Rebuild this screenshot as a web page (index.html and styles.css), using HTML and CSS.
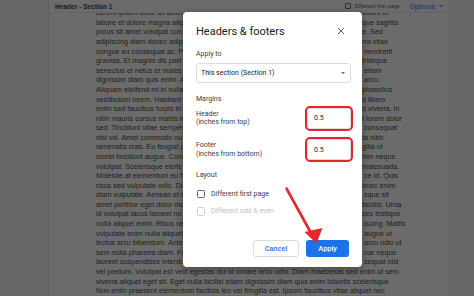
FILE: index.html
```html
<!DOCTYPE html>
<html>
<head>
<meta charset="utf-8">
<title>Headers &amp; footers</title>
<link rel="stylesheet" href="styles.css">
</head>
<body>
<div class="app">
  <div class="gutter"></div>
  <div class="page">
    <div class="hdr">
      <span class="hdr-title">Header - Section 1</span>
      <div class="hdr-right">
        <span class="mini-cb"></span>
        <span class="mini-lbl">Different first page</span>
        <span class="opts">Options<span class="opts-caret"></span></span>
      </div>
    </div>
    <div class="doc">
      <div class="doc-inner">
        <div class="ln">Lorem ipsum dolor sit amet, consectetur adipiscing elit, sed do eiusmod tempor incididunt ut</div>
        <div class="ln"><span class="l">labore et dolore magna aliq</span><span class="r">que sagittis</span></div>
        <div class="ln"><span class="l">purus sit amet volutpat con</span><span class="r">e. Sed</span></div>
        <div class="ln"><span class="l">adipiscing diam donec adip</span><span class="r">rra vitae</span></div>
        <div class="ln"><span class="l">congue eu consequat ac. P</span><span class="r pad">hendrerit</span></div>
        <div class="ln"><span class="l">gravida. Et magnis dis part</span><span class="r">tristique</span></div>
        <div class="ln"><span class="l">senectus et netus et males</span><span class="r pad">etiam</span></div>
        <div class="ln"><span class="l">dignissim diam quis enim. A</span><span class="r pad">arcu.</span></div>
        <div class="ln"><span class="l">Aliquam eleifend mi in nulla</span><span class="r">phasellus</span></div>
        <div class="ln"><span class="l">vestibulum lorem. Habitant</span><span class="r">d libero</span></div>
        <div class="ln"><span class="l">enim sed faucibus turpis in</span><span class="r">d viverra. In</span></div>
        <div class="ln"><span class="l">nibh mauris cursus mattis m</span><span class="r">t lorem dolor</span></div>
        <div class="ln"><span class="l">sed. Tincidunt vitae semper</span><span class="r pad">consequat</span></div>
        <div class="ln"><span class="l">nisl vel. Amet commodo nu</span><span class="r">ta nibh</span></div>
        <div class="ln"><span class="l">venenatis cras. Eu feugiat p</span><span class="r">gilla ut</span></div>
        <div class="ln"><span class="l">morbi tincidunt augue. Cons</span><span class="r">nim neque</span></div>
        <div class="ln"><span class="l">volutpat. Scelerisque eleife</span><span class="r">malesuada.</span></div>
        <div class="ln"><span class="l">Molestie at elementum eu f</span><span class="r pad">ce id. Quis</span></div>
        <div class="ln"><span class="l">risus sed vulputate odio. Du</span><span class="r">onec enim</span></div>
        <div class="ln"><span class="l">diam vulputate. Aenean et t</span><span class="r pad">sque sit</span></div>
        <div class="ln"><span class="l">amet porttitor eget dolor mo</span><span class="r">facilisi. Urna</span></div>
        <div class="ln"><span class="l">id volutpat lacus laoreet no</span><span class="r">ces tristique</span></div>
        <div class="ln"><span class="l">nulla aliquet enim. Risus ne</span><span class="r pad">iscing. Mattis</span></div>
        <div class="ln"><span class="l">vulputate enim nulla aliquet</span><span class="r pad">augue ut</span></div>
        <div class="ln"><span class="l">lectus arcu bibendum. Ante</span><span class="r pad">arcu odio ut</span></div>
        <div class="ln"><span class="l">sem nulla pharetra diam. Fa</span><span class="r pad">nar neque</span></div>
        <div class="ln"><span class="l">laoreet suspendisse interdu</span><span class="r pad">sequat nisi</span></div>
        <div class="ln">vel pretium. Volutpat est velit egestas dui id ornare arcu odio. Diam maecenas sed enim ut sem</div>
        <div class="ln">viverra aliquet eget sit. Eget nulla facilisi etiam dignissim diam quis enim lobortis scelerisque.</div>
        <div class="ln">Non enim praesent elementum facilisis leo vel fringilla est. Ipsum faucibus vitae aliquet nec</div>
      </div>
    </div>
  </div>
  <div class="gutter gutter-right"></div>

  <div class="dialog">
    <div class="dlg-head">
      <span class="dlg-title">Headers &amp; footers</span>
      <svg class="close" viewBox="0 0 10 10" width="10" height="10"><path d="M2 2 L8 8 M8 2 L2 8" stroke="#5f6368" stroke-width="1" fill="none"/></svg>
    </div>
    <div class="sect sect-apply">Apply to</div>
    <div class="select"><span>This section (Section 1)</span><span class="sel-caret"></span></div>
    <div class="sect sect-margins">Margins</div>
    <div class="mrow">
      <div class="mlabel">Header<br>(inches from top)</div>
      <div class="minput">0.5</div>
    </div>
    <div class="mrow mrow-footer">
      <div class="mlabel">Footer<br>(inches from bottom)</div>
      <div class="minput">0.5</div>
    </div>
    <div class="sect sect-layout">Layout</div>
    <div class="cb-row"><span class="cb"></span><span>Different first page</span></div>
    <div class="cb-row cb-disabled"><span class="cb"></span><span>Different odd &amp; even</span></div>
    <div class="btns">
      <div class="btn btn-cancel">Cancel</div>
      <div class="btn btn-apply">Apply</div>
    </div>
  </div>

  <svg class="arrow" viewBox="0 0 474 296" width="474" height="296">
    <line x1="286.5" y1="188.5" x2="311" y2="233" stroke="#e3292d" stroke-width="2.6" stroke-linecap="round"/>
    <polygon points="316.5,243.5 304.5,232 322.5,228" fill="#e3292d"/>
  </svg>
</div>
</body>
</html>
```

FILE: styles.css
```css
html, body {
  margin: 0;
  padding: 0;
}
body {
  background: #666666;
  font-family: "Liberation Sans", Arial, sans-serif;
}
.app {
  position: relative;
  display: flex;
  width: 474px;
  height: 296px;
  overflow: hidden;
  background: #666666;
}
.gutter {
  flex: 0 0 48px;
}
.gutter-right {
  flex: 1 1 auto;
}
.page {
  flex: 0 0 402px;
  box-sizing: border-box;
  background: #6b6b6b;
  border-left: 1px solid #5f5f5f;
  border-right: 1px solid #5f5f5f;
  display: flex;
  flex-direction: column;
}
.hdr {
  flex: 0 0 13px;
  box-sizing: border-box;
  display: flex;
  align-items: center;
  justify-content: space-between;
  padding: 0 6px 0 6px;
  border-bottom: 1px solid #646464;
}
.hdr-title {
  font-weight: bold;
  font-size: 6.6px;
  color: #1c1c1c;
}
.hdr-right {
  display: flex;
  align-items: center;
}
.mini-cb {
  width: 6px;
  height: 6px;
  box-sizing: border-box;
  border: 1px solid #2e2e2e;
  border-radius: 1px;
  margin-right: 4px;
}
.mini-lbl {
  font-size: 5.5px;
  color: #262626;
  margin-right: 10px;
}
.opts {
  display: flex;
  align-items: center;
  font-family: Roboto, sans-serif;
  font-weight: 500;
  font-size: 7.3px;
  color: #24406a;
}
.opts-caret {
  width: 0;
  height: 0;
  margin-left: 4px;
  border-left: 2px solid transparent;
  border-right: 2px solid transparent;
  border-top: 2.5px solid #24406a;
}
.doc {
  flex: 1 1 auto;
  overflow: hidden;
  padding-left: 47px;
}
.doc-inner {
  margin-top: -4.7px;
  font-size: 7.2px;
  line-height: 9.58px;
  color: #202020;
}
.ln {
  display: flex;
  height: 9.58px;
  white-space: nowrap;
}
.l {
  flex: 0 0 266px;
}
.r.pad {
  padding-left: 2px;
}

/* dialog */
.dialog {
  position: absolute;
  left: 183px;
  top: 12px;
  width: 179px;
  box-sizing: border-box;
  padding: 12px 11px 9.7px 13px;
  background: #ffffff;
  border-radius: 4px;
  box-shadow: 0 2px 8px rgba(0, 0, 0, 0.35);
  font-family: Roboto, "Liberation Sans", sans-serif;
  color: #3c4043;
}
.dlg-head {
  display: flex;
  align-items: center;
  justify-content: space-between;
  height: 14px;
}
.dlg-title {
  font-size: 11px;
  color: #202124;
  white-space: nowrap;
}
.close {
  margin-right: 5px;
}
.sect {
  font-size: 7px;
  line-height: 9px;
  color: #3c4043;
}
.sect-apply {
  margin-top: 11.8px;
}
.select {
  margin-top: 3.9px;
  height: 20px;
  box-sizing: border-box;
  border: 1px solid #dadce0;
  border-radius: 3px;
  display: flex;
  align-items: center;
  justify-content: space-between;
  padding: 0 5px 0 4px;
  font-size: 7px;
  color: #202124;
}
.sel-caret {
  width: 0;
  height: 0;
  border-left: 2px solid transparent;
  border-right: 2px solid transparent;
  border-top: 2.5px solid #5f6368;
}
.sect-margins {
  margin-top: 12.1px;
}
.mrow {
  margin-top: 4.2px;
  display: flex;
  align-items: center;
  justify-content: space-between;
  height: 20.7px;
}
.mrow-footer {
  margin-top: 10.6px;
}
.mlabel {
  font-size: 7px;
  line-height: 8.5px;
  color: #3c4043;
}
.minput {
  width: 44px;
  height: 20.7px;
  box-sizing: border-box;
  border: 1px solid #dadce0;
  border-radius: 3px;
  outline: 2.5px solid #e0282c;
  outline-offset: 0.5px;
  padding-left: 6px;
  display: flex;
  align-items: center;
  font-size: 7px;
  color: #202124;
}
.sect-layout {
  margin-top: 11.5px;
}
.cb-row {
  display: flex;
  align-items: center;
  gap: 5.7px;
  height: 12px;
  font-size: 7px;
  color: #3c4043;
  margin-top: 7.5px;
}
.cb-row + .cb-row {
  margin-top: 5.5px;
}
.cb {
  width: 8.6px;
  height: 8.6px;
  margin-left: 0.7px;
  box-sizing: border-box;
  border: 1px solid #5f6368;
  border-radius: 1.5px;
}
.cb-disabled {
  color: #bdc1c6;
}
.cb-disabled .cb {
  border-color: #cfd1d4;
}
.btns {
  margin-top: 22.5px;
  display: flex;
  justify-content: flex-end;
  gap: 6.7px;
  padding-right: 1.7px;
}
.btn {
  height: 17.3px;
  box-sizing: border-box;
  border-radius: 3px;
  display: flex;
  align-items: center;
  justify-content: center;
  font-size: 7.4px;
  font-weight: 500;
}
.btn-cancel {
  width: 46.6px;
  border: 1px solid #dadce0;
  color: #1a73e8;
  background: #ffffff;
}
.btn-apply {
  width: 43.3px;
  background: #1a73e8;
  color: #ffffff;
}
.arrow {
  position: absolute;
  left: 0;
  top: 0;
  pointer-events: none;
}
```
